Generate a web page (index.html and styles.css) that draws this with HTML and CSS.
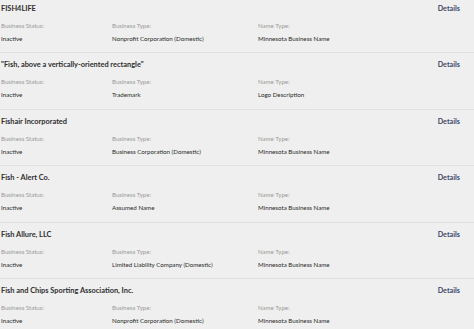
FILE: index.html
```html
<!DOCTYPE html>
<html>
<head>
<meta charset="utf-8">
<link rel="stylesheet" href="styles.css">
</head>
<body>
<div class="list">
  <div class="row">
    <div class="head"><span class="title">FISH4LIFE</span><a class="details">Details</a></div>
    <div class="grid">
      <span class="label">Business Status:</span><span class="label">Business Type:</span><span class="label">Name Type:</span>
      <span class="value">Inactive</span><span class="value">Nonprofit Corporation (Domestic)</span><span class="value">Minnesota Business Name</span>
    </div>
  </div>
  <div class="row">
    <div class="head"><span class="title">"Fish, above a vertically-oriented rectangle"</span><a class="details">Details</a></div>
    <div class="grid">
      <span class="label">Business Status:</span><span class="label">Business Type:</span><span class="label">Name Type:</span>
      <span class="value">Inactive</span><span class="value">Trademark</span><span class="value">Logo Description</span>
    </div>
  </div>
  <div class="row">
    <div class="head"><span class="title">Fishair Incorporated</span><a class="details">Details</a></div>
    <div class="grid">
      <span class="label">Business Status:</span><span class="label">Business Type:</span><span class="label">Name Type:</span>
      <span class="value">Inactive</span><span class="value">Business Corporation (Domestic)</span><span class="value">Minnesota Business Name</span>
    </div>
  </div>
  <div class="row">
    <div class="head"><span class="title">Fish - Alert Co.</span><a class="details">Details</a></div>
    <div class="grid">
      <span class="label">Business Status:</span><span class="label">Business Type:</span><span class="label">Name Type:</span>
      <span class="value">Inactive</span><span class="value">Assumed Name</span><span class="value">Minnesota Business Name</span>
    </div>
  </div>
  <div class="row">
    <div class="head"><span class="title">Fish Allure, LLC</span><a class="details">Details</a></div>
    <div class="grid">
      <span class="label">Business Status:</span><span class="label">Business Type:</span><span class="label">Name Type:</span>
      <span class="value">Inactive</span><span class="value">Limited Liability Company (Domestic)</span><span class="value">Minnesota Business Name</span>
    </div>
  </div>
  <div class="row">
    <div class="head"><span class="title">Fish and Chips Sporting Association, Inc.</span><a class="details">Details</a></div>
    <div class="grid">
      <span class="label">Business Status:</span><span class="label">Business Type:</span><span class="label">Name Type:</span>
      <span class="value">Inactive</span><span class="value">Nonprofit Corporation (Domestic)</span><span class="value">Minnesota Business Name</span>
    </div>
  </div>
</div>
</body>
</html>
```

FILE: styles.css
```css
html, body {
  margin: 0;
  padding: 0;
  background: #efefef;
  font-family: Lato, "Open Sans", sans-serif;
  overflow: hidden;
}
.list {
  margin-top: -3px;
}
.row {
  height: 55.4px;
  border-bottom: 1px solid #e0e0e0;
  padding: 0 14px 0 1px;
}
.head {
  display: flex;
  justify-content: space-between;
  align-items: center;
  height: 12px;
  padding-top: 6px;
}
.title {
  font-weight: 700;
  font-size: 7.4px;
  line-height: 12px;
  color: #2e2e2e;
}
.details {
  font-weight: 700;
  font-size: 7.2px;
  line-height: 12px;
  color: #3c4a6a;
}
.grid {
  display: grid;
  grid-template-columns: 111px 146px 1fr;
  grid-auto-rows: 8px;
  row-gap: 5px;
  margin-top: 7px;
}
.label {
  font-size: 6.1px;
  line-height: 8px;
  color: #9a9a9a;
}
.value {
  font-size: 6.2px;
  line-height: 8px;
  color: #2a2a2a;
}
```
